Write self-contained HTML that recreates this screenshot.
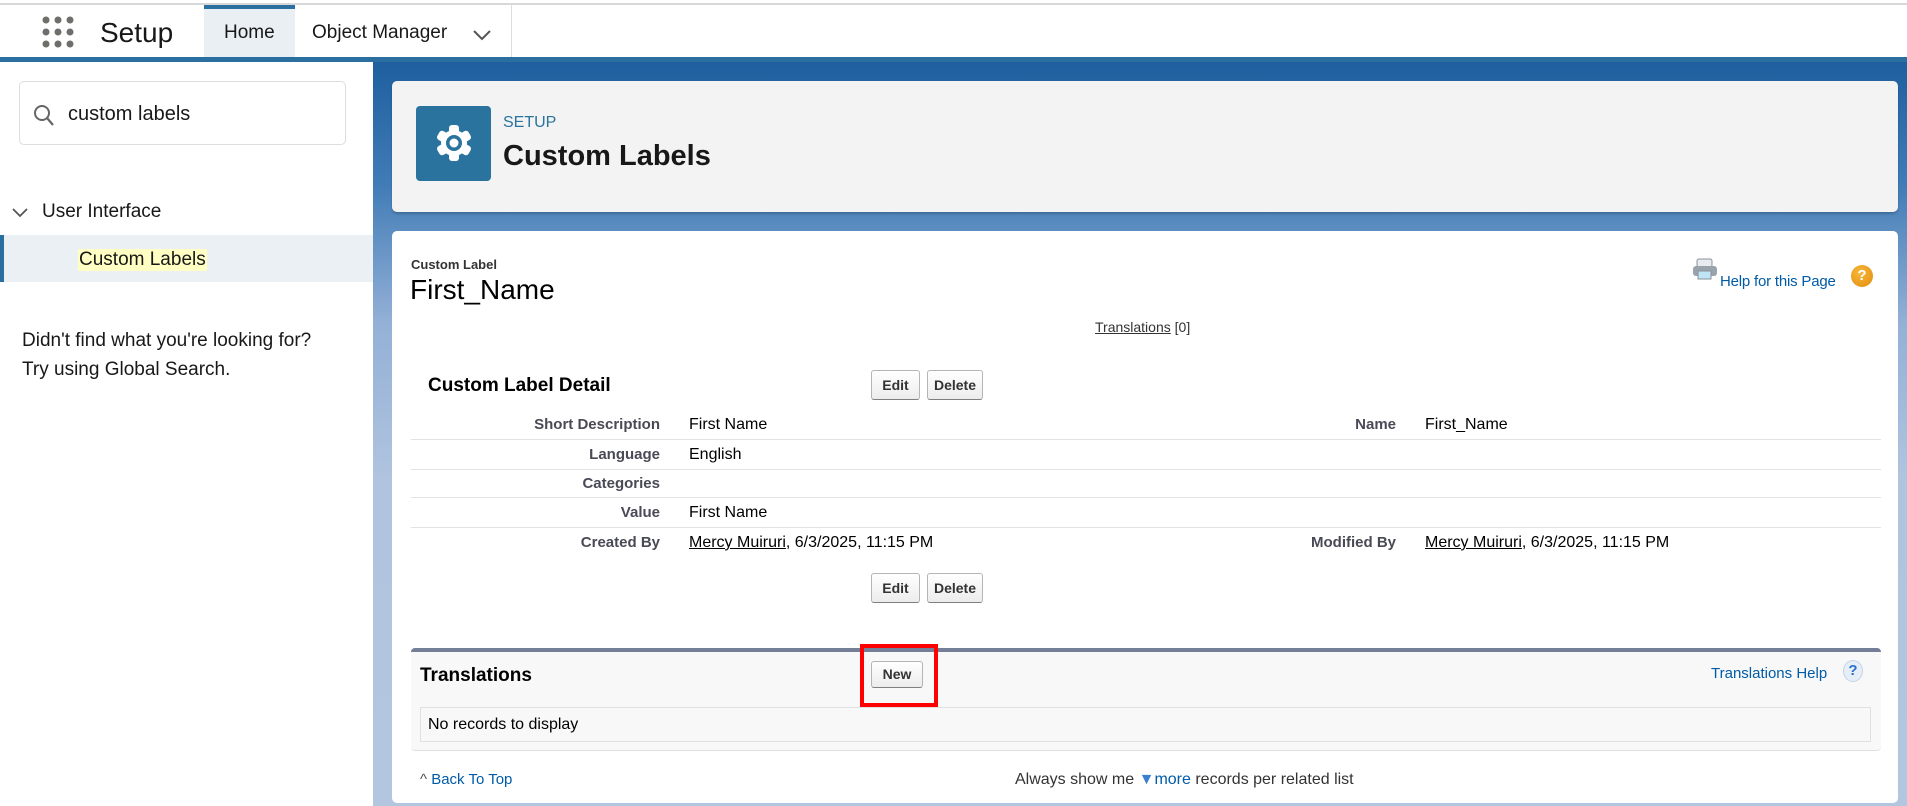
<!DOCTYPE html>
<html><head><meta charset="utf-8"><style>
*{box-sizing:border-box;margin:0;padding:0}
body{width:1907px;height:806px;overflow:hidden;font-family:"Liberation Sans",Arial,sans-serif;background:#fff;position:relative;color:#181818}
.a{position:absolute;white-space:nowrap}
.btn{position:absolute;border:1px solid #b5b5b5;border-bottom-color:#7f7f7f;border-radius:3px;background:linear-gradient(#fff,#ececec);font-size:14px;font-weight:bold;color:#333;text-align:center}
.lbl{position:absolute;font-size:15px;font-weight:bold;color:#4a4a56;text-align:right}
.val{position:absolute;font-size:16px;color:#000}
.ln{position:absolute;left:411px;width:1470px;height:1px;background:#e3e3e3}
a{color:#015ba7}
</style></head><body>
<div class="a" style="left:0;top:3px;width:1907px;height:2px;background:#d8d8d8"></div>
<div class="a" style="left:0;top:57px;width:1907px;height:5px;background:#2a6f9f"></div>
<svg class="a" style="left:42px;top:16px" width="32" height="32" viewBox="0 0 32 32" fill="#706e6b"><circle cx="4" cy="4" r="3.5"/><circle cx="16" cy="4" r="3.5"/><circle cx="28" cy="4" r="3.5"/><circle cx="4" cy="16" r="3.5"/><circle cx="16" cy="16" r="3.5"/><circle cx="28" cy="16" r="3.5"/><circle cx="4" cy="28" r="3.5"/><circle cx="16" cy="28" r="3.5"/><circle cx="28" cy="28" r="3.5"/></svg>
<div class="a" style="left:100px;top:17px;font-size:28px;color:#181818">Setup</div>
<div class="a" style="left:204px;top:5px;width:91px;height:52px;background:#e9eff3;border-top:4px solid #2a6f9f"></div>
<div class="a" style="left:224px;top:22px;font-size:19px;color:#181818">Home</div>
<div class="a" style="left:312px;top:22px;font-size:19px;color:#181818">Object Manager</div>
<svg class="a" style="left:472px;top:29px" width="20" height="12"><path d="M2 2l8 8 8-8" stroke="#555" stroke-width="2" fill="none"/></svg>
<div class="a" style="left:511px;top:5px;width:1px;height:52px;background:#ddd"></div>
<div class="a" style="left:19px;top:81px;width:327px;height:64px;border:1px solid #ddd;border-radius:5px"></div>
<svg class="a" style="left:33px;top:104px" width="22" height="24"><circle cx="9" cy="9" r="7" stroke="#666" stroke-width="2" fill="none"/><path d="M14 14l6 7" stroke="#666" stroke-width="2.2"/></svg>
<div class="a" style="left:68px;top:103px;font-size:20px;color:#181818">custom labels</div>
<svg class="a" style="left:11px;top:207px" width="18" height="12"><path d="M2 2l7 7 7-7" stroke="#555" stroke-width="1.8" fill="none"/></svg>
<div class="a" style="left:42px;top:201px;font-size:19px">User Interface</div>
<div class="a" style="left:0;top:235px;width:373px;height:47px;background:#eaf0f4;border-left:4px solid #2a6f9f"></div>
<div class="a" style="left:78px;top:249px;font-size:19px;background:#ffffc4;padding:0 1px">Custom Labels</div>
<div class="a" style="left:22px;top:326px;font-size:19px;line-height:29px">Didn't find what you're looking for?<br>Try using Global Search.</div>
<div class="a" style="left:373px;top:62px;width:1534px;height:744px;background:linear-gradient(#1f5f9f 0px,#3f7bb6 120px,#93b0d6 260px,#b0c4df 420px,#b3c6df 744px)"></div>
<div class="a" style="left:392px;top:81px;width:1506px;height:131px;background:#f3f3f3;border-radius:5px;box-shadow:0 2px 2px rgba(0,0,0,.2)"></div>
<div class="a" style="left:416px;top:106px;width:75px;height:75px;background:#2a739e;border-radius:4px"></div>
<svg class="a" style="left:433px;top:122px" width="42" height="42" viewBox="0 0 42 42"><g fill="#fff"><circle cx="21" cy="21" r="13"/><rect x="16" y="3" width="10" height="36" rx="3"/><rect x="16" y="3" width="10" height="36" rx="3" transform="rotate(60 21 21)"/><rect x="16" y="3" width="10" height="36" rx="3" transform="rotate(120 21 21)"/></g><circle cx="21" cy="21" r="8" fill="#2a739e"/><circle cx="21" cy="21" r="4.5" fill="#fff"/></svg>
<div class="a" style="left:503px;top:114px;font-size:16px;color:#2a739e">SETUP</div>
<div class="a" style="left:503px;top:140px;font-size:29px;font-weight:bold;color:#181818">Custom Labels</div>
<div class="a" style="left:392px;top:231px;width:1506px;height:572px;background:#fff;border-radius:5px"></div>
<div class="a" style="left:411px;top:257px;font-size:13px;font-weight:bold;color:#333">Custom Label</div>
<div class="a" style="left:410px;top:274px;font-size:28px;color:#000">First_Name</div>
<svg class="a" style="left:1692px;top:258px" width="26" height="24"><rect x="5" y="1" width="15" height="8" rx="2" fill="#e8ecef" stroke="#8a9199"/><rect x="1" y="8" width="24" height="10" rx="3" fill="#9aa3ab"/><rect x="6" y="13" width="13" height="8" fill="#bfe4f6" stroke="#8a9199"/></svg>
<div class="a" style="left:1720px;top:273px;font-size:15px;color:#015ba7;letter-spacing:-0.2px">Help for this Page</div>
<div class="a" style="left:1851px;top:265px;width:22px;height:22px;border-radius:50%;background:radial-gradient(circle at 40% 35%,#f7b83a,#e28b0c);color:#fff;font-weight:bold;font-size:15px;text-align:center;line-height:22px">?</div>
<div class="a" style="left:1095px;top:319px;font-size:14px;color:#333"><u>Translations</u> [0]</div>
<div class="a" style="left:428px;top:375px;font-size:19px;font-weight:bold;color:#000">Custom Label Detail</div>
<div class="btn" style="left:871px;top:370px;width:49px;height:30px;line-height:28px">Edit</div>
<div class="btn" style="left:927px;top:370px;width:56px;height:30px;line-height:28px">Delete</div>
<div class="lbl" style="right:1247px;top:416px">Short Description</div><div class="val" style="left:689px;top:416px">First Name</div>
<div class="lbl" style="right:511px;top:416px">Name</div><div class="val" style="left:1425px;top:416px">First_Name</div>
<div class="ln" style="top:439px"></div>
<div class="lbl" style="right:1247px;top:446px">Language</div><div class="val" style="left:689px;top:446px">English</div>
<div class="ln" style="top:469px"></div>
<div class="lbl" style="right:1247px;top:475px">Categories</div>
<div class="ln" style="top:497px"></div>
<div class="lbl" style="right:1247px;top:504px">Value</div><div class="val" style="left:689px;top:504px">First Name</div>
<div class="ln" style="top:527px"></div>
<div class="lbl" style="right:1247px;top:534px">Created By</div><div class="val" style="left:689px;top:534px"><u>Mercy Muiruri</u>, 6/3/2025, 11:15 PM</div>
<div class="lbl" style="right:511px;top:534px">Modified By</div><div class="val" style="left:1425px;top:534px"><u>Mercy Muiruri</u>, 6/3/2025, 11:15 PM</div>
<div class="btn" style="left:871px;top:573px;width:49px;height:30px;line-height:28px">Edit</div>
<div class="btn" style="left:927px;top:573px;width:56px;height:30px;line-height:28px">Delete</div>
<div class="a" style="left:411px;top:648px;width:1470px;height:103px;background:#f8f8f8;border-top:4px solid #747e96;border-radius:4px;border-bottom:1px solid #e0e0e0"></div>
<div class="a" style="left:420px;top:665px;font-size:19px;font-weight:bold;color:#000">Translations</div>
<div class="btn" style="left:871px;top:661px;width:52px;height:27px;line-height:25px">New</div>
<div class="a" style="left:860px;top:644px;width:78px;height:63px;border:4px solid #f00"></div>
<div class="a" style="left:1711px;top:665px;font-size:15px;color:#015ba7">Translations Help</div>
<div class="a" style="left:1843px;top:660px;width:20px;height:22px;border-radius:50%;background:#e6eef7;border:1px solid #c3d3e6;color:#2a6fc9;font-weight:bold;font-size:15px;text-align:center;line-height:20px">?</div>
<div class="a" style="left:420px;top:707px;width:1451px;height:35px;background:#f8f8f8;border:1px solid #e0e0e0"></div>
<div class="a" style="left:428px;top:716px;font-size:16px;color:#000">No records to display</div>
<div class="a" style="left:420px;top:771px;font-size:15px;color:#015ba7"><span style="color:#555">^</span> Back To Top</div>
<div class="a" style="left:1015px;top:771px;font-size:16px;color:#333">Always show me <span style="color:#3a7fd0">▼</span><span style="color:#015ba7">more</span> records per related list</div>
</body></html>
